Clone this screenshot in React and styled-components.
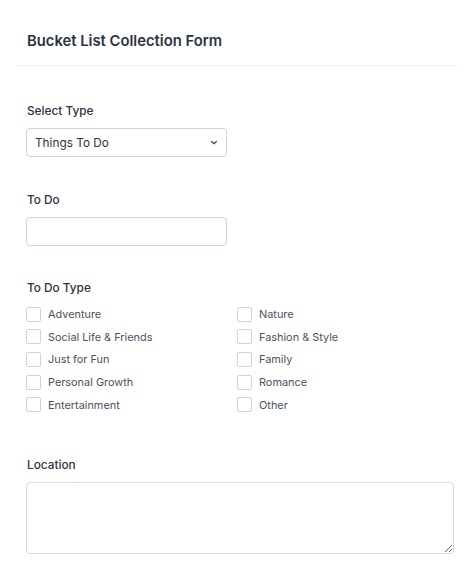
import React from 'react'
import styled, { createGlobalStyle } from 'styled-components'

const GlobalStyle = createGlobalStyle`
  html, body {
    margin: 0;
    padding: 0;
    background: #fff;
  }
  body {
    font-family: "Inter", "Noto Sans", sans-serif;
    color: #2c3345;
  }
  input, select, textarea, button {
    font-family: "Inter", "Noto Sans", sans-serif;
  }
`

const options = [
  'Adventure', 'Nature',
  'Social Life & Friends', 'Fashion & Style',
  'Just for Fun', 'Family',
  'Personal Growth', 'Romance',
  'Entertainment', 'Other',
]

const App = () => {
  return (
    <>
      <GlobalStyle />
      <Page>
        <Header>
          <Title>Bucket List Collection Form</Title>
        </Header>

        <Field $top={37}>
          <Label>Select Type</Label>
          <SelectWrap>
            <Select defaultValue='things'>
              <option value='things'>Things To Do</option>
              <option value='places'>Places To Go</option>
            </Select>
            <Chevron viewBox='0 0 10 6'>
              <path d='M1.5 1.2 5 4.6 8.5 1.2' />
            </Chevron>
          </SelectWrap>
        </Field>

        <Field $top={35}>
          <Label>To Do</Label>
          <Input type='text' />
        </Field>

        <Field $top={34}>
          <Label>To Do Type</Label>
          <CheckGrid>
            {options.map((o) => (
              <CheckRow key={o}>
                <Box type='checkbox' />
                <CheckText>{o}</CheckText>
              </CheckRow>
            ))}
          </CheckGrid>
        </Field>

        <Field $top={41}>
          <Label>Location</Label>
          <TextArea />
        </Field>
      </Page>
    </>
  )
}

export default App

const Page = styled.div`
  width: 474px;
  min-height: 583px;
  box-sizing: border-box;
`

const Header = styled.div`
  margin: 0 16px;
  padding: 31px 11px 14px;
  border-bottom: 1px solid #eef0f4;
`

const Title = styled.h1`
  margin: 0;
  font-size: 14.8px;
  line-height: 20px;
  font-weight: 600;
  color: #2c3345;
`

const Field = styled.div`
  padding: ${(p) => p.$top}px 20px 0 26px;
  display: flex;
  flex-direction: column;
`

const Label = styled.label`
  font-size: 11.8px;
  line-height: 16px;
  font-weight: 500;
  color: #2c3345;
  margin: 0 0 9px 1px;
`

const SelectWrap = styled.div`
  position: relative;
  width: 201px;
  height: 29px;
`

const Select = styled.select`
  appearance: none;
  width: 100%;
  height: 100%;
  box-sizing: border-box;
  border: 1px solid #cfd3da;
  border-radius: 4px;
  background: #fff;
  padding: 0 24px 0 8px;
  font-size: 11.8px;
  color: #2c3345;
  outline: none;
`

const Chevron = styled.svg`
  position: absolute;
  right: 9px;
  top: 12px;
  width: 8px;
  height: 5px;
  fill: none;
  stroke: #2c3345;
  stroke-width: 1.5;
  pointer-events: none;
`

const Input = styled.input`
  width: 201px;
  height: 29px;
  box-sizing: border-box;
  border: 1px solid #cfd3da;
  border-radius: 4px;
  background: #fff;
  outline: none;
`

const CheckGrid = styled.div`
  display: grid;
  grid-template-columns: 211px 1fr;
  margin-top: -2px;
`

const CheckRow = styled.label`
  display: flex;
  align-items: center;
  gap: 7px;
  height: 22.6px;
`

const Box = styled.input`
  appearance: none;
  margin: 0;
  width: 15px;
  height: 15px;
  box-sizing: border-box;
  border: 1px solid #cfd3da;
  border-radius: 2px;
  background: #fff;
  flex: none;
`

const CheckText = styled.span`
  font-size: 10.9px;
  color: #4a5265;
`

const TextArea = styled.textarea`
  width: 428px;
  height: 72px;
  box-sizing: border-box;
  border: 1px solid #d6d9df;
  border-radius: 4px;
  background: #fff;
  resize: vertical;
  outline: none;
`
